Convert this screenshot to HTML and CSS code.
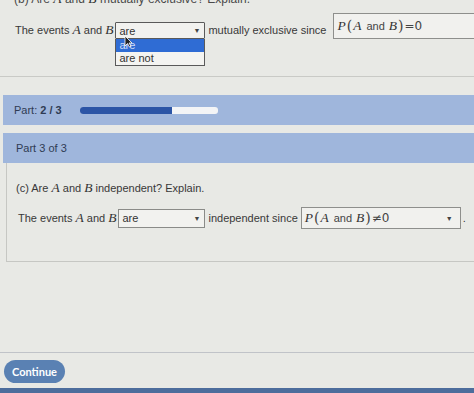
FILE: index.html
```html
<!DOCTYPE html>
<html>
<head>
<meta charset="utf-8">
<link rel="stylesheet" href="styles.css">
</head>
<body>
<div class="page">
  <section class="top">
    <p class="cut">(b) Are <i class="m">A</i> and <i class="m">B</i> mutually exclusive? Explain.</p>
    <div class="row row1">
      <span class="txt">The events <i class="m">A</i> and <i class="m">B</i></span>
      <div class="selwrap">
        <div class="sel sel1"><span>are</span><span class="arr">▼</span></div>
        <div class="menu">
          <div class="opt on">are</div>
          <div class="opt">are not</div>
        </div>
        <svg class="cursor" width="9" height="13" viewBox="0 0 9 13"><path d="M1 1 L1 11 L3.5 8.5 L5.5 12 L7 11.3 L5 8 L8 8 Z" fill="#222" stroke="#fff" stroke-width="0.8"/></svg>
      </div>
      <span class="txt">mutually exclusive since</span>
      <div class="mbox mbox1"><i class="m">P</i><span class="par">(</span><i class="m">A</i><span class="and">and</span><i class="m">B</i><span class="par">)</span><span class="eq">=0</span></div>
    </div>
  </section>

  <div class="partbar">
    <span class="plabel">Part: <b>2 / 3</b></span>
    <div class="prog"><div class="fill" style="width:66.7%"></div></div>
  </div>

  <div class="parthead">Part 3 of 3</div>

  <section class="card">
    <p class="q">(c) Are <i class="m">A</i> and <i class="m">B</i> independent? Explain.</p>
    <div class="row row2">
      <span class="txt">The events <i class="m">A</i> and <i class="m">B</i></span>
      <div class="sel sel2"><span>are</span><span class="arr">▼</span></div>
      <span class="txt">independent since</span>
      <div class="mbox mbox2"><i class="m">P</i><span class="par">(</span><i class="m">A</i><span class="and">and</span><i class="m">B</i><span class="par">)</span><span class="eq">≠0</span><span class="arr arr2">▼</span></div>
      <span class="txt dot">.</span>
    </div>
  </section>

  <div class="empty"></div>

  <footer class="foot">
    <button class="cont">Continue</button>
  </footer>
  <div class="strip"></div>
</div>
</body>
</html>
```
FILE: styles.css
```css
html, body {
  margin: 0;
  padding: 0;
  background: #e8e9e5;
}
.page {
  width: 474px;
  height: 393px;
  overflow: hidden;
  display: flex;
  flex-direction: column;
  font-family: "Liberation Sans", Arial, sans-serif;
  font-size: 11px;
  color: #383838;
}
.m {
  font-family: "Liberation Serif", "Times New Roman", serif;
  font-style: italic;
  font-size: 13.5px;
  color: #333;
}
.top {
  height: 76px;
  border-bottom: 1px solid #c9cac6;
  display: flex;
  flex-direction: column;
}
.cut {
  margin: -8px 0 0 14px;
  height: 13px;
  line-height: 13px;
  font-size: 12px;
  color: #4a4a4a;
  white-space: nowrap;
}
.row {
  display: flex;
  align-items: center;
  white-space: nowrap;
}
.row > * { flex-shrink: 0; }
.row1 {
  margin-top: 7px;
  height: 27px;
  padding-left: 15px;
}
.row1 .txt {
  align-self: flex-end;
  padding-bottom: 2px;
  line-height: 14px;
}
.selwrap {
  position: relative;
  align-self: flex-end;
  margin: 0 3px 0 2px;
}
.sel {
  display: flex;
  align-items: center;
  justify-content: space-between;
  box-sizing: border-box;
  background: #f2f2ef;
  border: 1px solid #5a5a5a;
  padding: 0 4px 0 3px;
  color: #333;
}
.sel1 {
  width: 90px;
  height: 17px;
  border-radius: 1px;
}
.arr {
  font-size: 7px;
  color: #444;
}
.menu {
  position: absolute;
  left: 0;
  top: 17px;
  width: 90px;
  box-sizing: border-box;
  border: 1px solid #5a5a5a;
  border-top: none;
  background: #f4f4f1;
}
.opt {
  height: 13px;
  line-height: 13px;
  padding-left: 3px;
  color: #333;
}
.opt.on {
  background: #2f6cd4;
  color: #cfdcf4;
}
.cursor {
  position: absolute;
  left: 9px;
  top: 13px;
}
.mbox {
  display: flex;
  align-items: center;
  box-sizing: border-box;
  border: 1px solid #8e8f8c;
  background: #f1f1ee;
  padding-left: 3px;
}
.mbox1 {
  margin-left: 7px;
  height: 26px;
  flex: 1 0 auto;
  margin-right: -4px;
}
.par {
  font-family: "DejaVu Serif", serif;
  font-size: 14px;
  color: #444;
  margin: 0 1px;
}
.and {
  margin: 0 4px 0 5px;
  color: #444;
}
.eq {
  font-family: "DejaVu Sans", sans-serif;
  font-size: 12px;
  color: #444;
}
.partbar {
  margin: 18px 0 0 3px;
  height: 30px;
  background: #9fb6dc;
  display: flex;
  align-items: center;
  color: #2f3c54;
}
.plabel {
  width: 66px;
  padding-left: 11px;
}
.plabel b { font-weight: bold; }
.prog {
  width: 138px;
  height: 7px;
  background: #f3f4f6;
  border-radius: 3px;
  overflow: hidden;
}
.fill {
  height: 100%;
  background: #2c55a6;
}
.parthead {
  margin: 8px 0 0 3px;
  height: 30px;
  line-height: 30px;
  background: #9fb6dc;
  padding-left: 13px;
  color: #2f3c54;
}
.card {
  margin-left: 6px;
  height: 99px;
  border-left: 1px solid #c6c7c3;
  border-bottom: 1px solid #c6c7c3;
  box-sizing: border-box;
  padding-top: 18px;
}
.q {
  margin: 0 0 0 9px;
  line-height: 14px;
  color: #383838;
  white-space: nowrap;
}
.row2 {
  margin-top: 12px;
  height: 22px;
  padding-left: 11px;
}
.sel2 {
  width: 87px;
  height: 19px;
  margin: 0 3px 0 2px;
  border-color: #8a8b88;
}
.mbox2 {
  width: 160px;
  height: 22px;
  margin-left: 3px;
}
.arr2 {
  margin-left: auto;
  margin-right: 7px;
}
.dot {
  margin-left: 2px;
}
.empty {
  flex: 1;
}
.foot {
  height: 36px;
  border-top: 1px solid #c0c3c8;
  padding: 7px 0 0 4px;
  box-sizing: border-box;
}
.cont {
  width: 61px;
  height: 23px;
  border: none;
  border-radius: 12px;
  background: #5a81b3;
  color: #fff;
  font-family: Lato, "Liberation Sans", sans-serif;
  font-weight: bold;
  font-size: 11px;
  padding: 0;
}
.strip {
  height: 5px;
  background: #4d6d9c;
}
```
